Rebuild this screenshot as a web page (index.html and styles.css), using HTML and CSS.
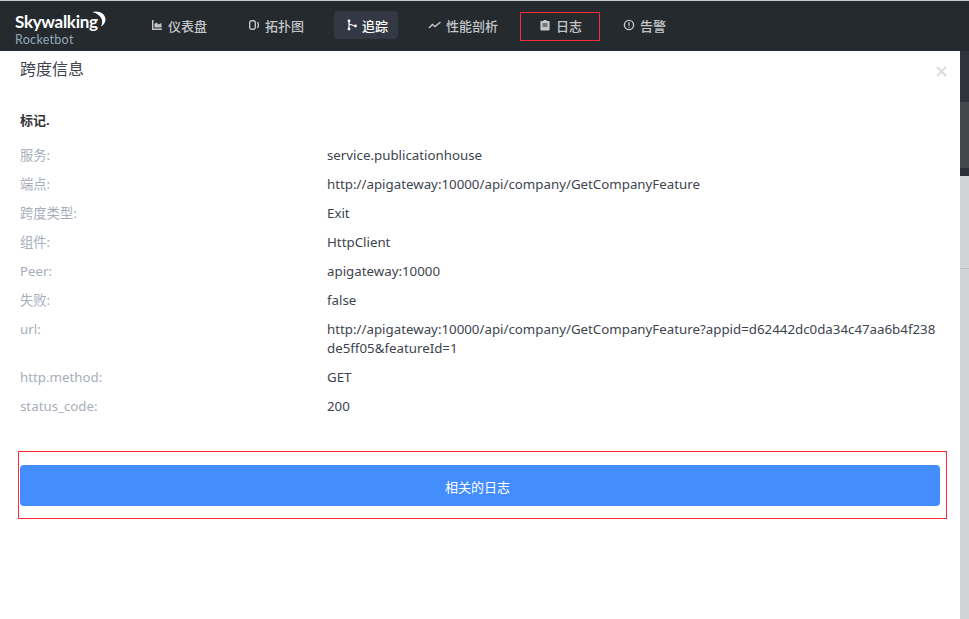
FILE: index.html
```html
<!DOCTYPE html>
<html lang="zh">
<head>
<meta charset="utf-8">
<title>Rocketbot</title>
<link rel="stylesheet" href="styles.css">
</head>
<body>
<div class="app">
  <header class="topbar">
    <div class="logo">
      <div class="logo-main"><span>Skywalking</span>
        <svg class="moon" viewBox="0 0 14 16" width="14" height="16"><path d="M0 1C6-1 13.500 2 13.500 8.500c0 3-1.800 5.500-4.500 7 1.500-3 1.500-6 .2-8.500C7.500 4 4 1.800 0 1z" fill="#fff"/></svg>
      </div>
      <div class="logo-sub">Rocketbot</div>
    </div>
    <nav class="nav">
      <a class="nav-item"><svg class="ico" viewBox="0 0 12 12" width="12" height="12"><path d="M1 1h1.500v8.500H11V11H1zM3.500 8.500V5l2 -1.500 2 2 3-1.500v4.500z" fill="currentColor"/></svg>仪表盘</a>
      <a class="nav-item"><svg class="ico" viewBox="0 0 12 12" width="12" height="12"><rect x="1.700" y="1.700" width="5.600" height="8.600" rx="2" fill="none" stroke="currentColor" stroke-width="1.400"/><path d="M9.500 3c1.200 2 1.200 4 0 6" fill="none" stroke="currentColor" stroke-width="1.400"/></svg>拓扑图</a>
      <a class="nav-item active"><svg class="ico" viewBox="0 0 12 12" width="12" height="12"><path d="M3 2v8M3 5l6 2" stroke="currentColor" stroke-width="1.200" fill="none"/><circle cx="3" cy="2" r="1.400" fill="currentColor"/><circle cx="3" cy="10" r="1.400" fill="currentColor"/><circle cx="9.500" cy="7" r="1.400" fill="currentColor"/></svg>追踪</a>
      <a class="nav-item"><svg class="ico wide" viewBox="0 0 14 12" width="14" height="12"><path d="M1 9l3.500-3.500 2.500 2L12.500 3" fill="none" stroke="currentColor" stroke-width="1.400"/></svg>性能剖析</a>
      <a class="nav-item flagged"><svg class="ico" viewBox="0 0 12 12" width="12" height="12"><path d="M2 2h2.500V1h3v1H10a.6.6 0 0 1 .6.6v8.200a.6.6 0 0 1-.6.6H2a.6.6 0 0 1-.6-.6V2.600A.6.6 0 0 1 2 2z" fill="currentColor"/><path d="M3.500 5h5M3.500 7h5" stroke="#252a2f" stroke-width="1"/></svg>日志</a>
      <a class="nav-item"><svg class="ico" viewBox="0 0 12 12" width="12" height="12"><circle cx="6" cy="6" r="4.600" fill="none" stroke="currentColor" stroke-width="1.400"/><path d="M6 3.300v3.400M6 7.700v1.100" stroke="currentColor" stroke-width="1.300"/></svg>告警</a>
    </nav>
  </header>
  <div class="body-row">
    <main class="panel">
      <div class="panel-head">
        <h2 class="panel-title">跨度信息</h2>
        <svg class="close" viewBox="0 0 11 11" width="11" height="11"><path d="M1 1l9 9M10 1l-9 9" stroke="#dcdcdc" stroke-width="2" fill="none"/></svg>
      </div>
      <h3 class="section-title">标记.</h3>
      <dl class="info">
        <div class="row"><dt>服务:</dt><dd>service.publicationhouse</dd></div>
        <div class="row"><dt>端点:</dt><dd>http://apigateway:10000/api/company/GetCompanyFeature</dd></div>
        <div class="row"><dt>跨度类型:</dt><dd>Exit</dd></div>
        <div class="row"><dt>组件:</dt><dd>HttpClient</dd></div>
        <div class="row"><dt>Peer:</dt><dd>apigateway:10000</dd></div>
        <div class="row"><dt>失败:</dt><dd>false</dd></div>
        <div class="row"><dt>url:</dt><dd>http://apigateway:10000/api/company/GetCompanyFeature?appid=d62442dc0da34c47aa6b4f238de5ff05&amp;featureId=1</dd></div>
        <div class="row"><dt>http.method:</dt><dd>GET</dd></div>
        <div class="row"><dt>status_code:</dt><dd>200</dd></div>
      </dl>
      <div class="action-frame">
        <button class="action" type="button">相关的日志</button>
      </div>
    </main>
    <aside class="strip">
      <div class="strip-a"></div>
      <div class="strip-b"></div>
      <div class="strip-c"></div>
      <div class="strip-d"></div>
      <div class="strip-e"></div>
    </aside>
  </div>
</div>
</body>
</html>
```
FILE: styles.css
```css
* { box-sizing: border-box; }
html, body { margin: 0; padding: 0; height: 100%; overflow: hidden; }
body {
  font-family: "Noto Sans", "Noto Sans CJK SC", sans-serif;
  font-size: 13px;
  color: #3d444f;
  background: #fff;
}
.app { display: flex; flex-direction: column; height: 619px; }

.topbar {
  flex: none;
  height: 50px;
  margin-top: 1px;
  background: #252a2f;
  display: flex;
  align-items: flex-start;
  position: relative;
}
.topbar::before {
  content: "";
  position: absolute;
  left: 0; right: 0; top: -1px;
  height: 1px;
  background: #c9c9c9;
}
.logo { width: 139px; padding: 11px 0 0 15px; flex: none; font-family: Lato, sans-serif; }
.logo-main { display: flex; height: 19px; align-items: flex-start; color: #fff; font-size: 17px; font-weight: 700; line-height: 19px; letter-spacing: -.3px; }
.moon { margin: -1px 0 0 -6px; }
.logo-sub { font-size: 12.500px; line-height: 15px; margin-top: 1px; color: #92a8bd; letter-spacing: .3px; }

.nav { display: flex; gap: 19px; align-items: center; height: 28px; margin-top: 10px; }
.nav-item {
  display: flex;
  align-items: center;
  height: 28px;
  padding: 0 10px 0 12px;
  color: #c3c5c8;
  border-radius: 4px;
  position: relative;
  white-space: nowrap;
  font-weight: 500;
}
.nav-item.active { background: #333844; color: #fff; margin: 0 -1px 0 1px; }
.nav-item.active .ico { margin-right: 4px; }
.nav-item.flagged::after {
  content: "";
  position: absolute;
  left: -7px; right: -8px; top: 1px; bottom: -2px;
  border: 1px solid #ff2a36;
}
.ico { flex: none; margin-right: 5px; }
.ico.wide { margin-right: 4px; }

.body-row { flex: 1; display: flex; min-height: 0; }
.panel { flex: 1; min-width: 0; background: #fff; padding: 0 20px; }
.panel-head { display: flex; justify-content: space-between; height: 36px; align-items: flex-start; }
.panel-title { margin: 8px 0 0; font-size: 16px; line-height: 20px; font-weight: 400; color: #3d444f; }
.close { margin: 15px -7px 0 0; }
.section-title { margin: 23px 0 0; font-size: 13px; line-height: 20px; font-weight: 700; color: #333; }
.info { margin: 15.600px 0 0; font-size: 13.300px; }
.row { display: flex; margin-bottom: 9.500px; line-height: 19.500px; }
.row dt { width: 307px; flex: none; color: #a7aebb; }
.row dd { margin: 0; flex: 1; min-width: 0; word-break: break-all; color: #3d444f; }

.action-frame { margin: 34.400px -7px 0 -2px; border: 1px solid #ff2a36; padding: 13px 6px 12px 1px; }
.action {
  display: block;
  width: 100%;
  height: 41px;
  border: 0;
  border-radius: 4px;
  background: #448dfe;
  color: #fff;
  font: inherit;
  padding: 2px 5px 0 0;
}

.strip { flex: none; width: 9px; display: flex; flex-direction: column; }
.strip-a { height: 51px; background: #2e343b; }
.strip-b { height: 66px; background: #43474e; }
.strip-c { height: 8px; background: #2b3038; }
.strip-d { height: 93px; background: #d2d3d5; border-bottom: 1px solid #bdbec1; }
.strip-e { flex: 1; background: #d2d3d5; }
```
